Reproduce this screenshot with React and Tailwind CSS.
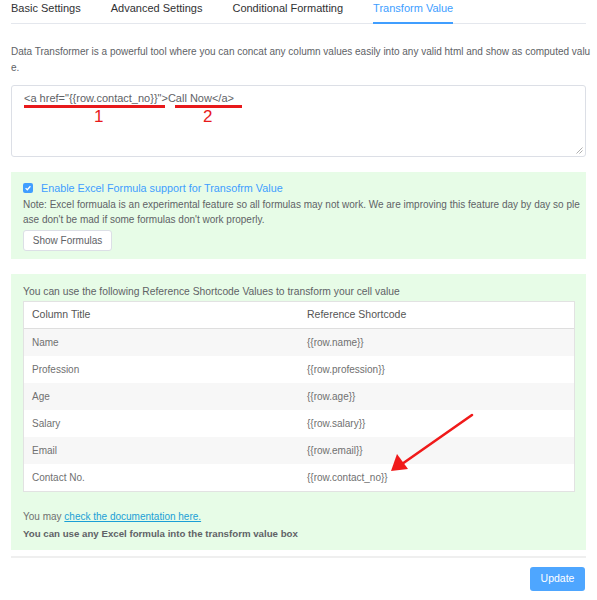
import React from "react";

const rows = [
  ["Name", "{{row.name}}"],
  ["Profession", "{{row.profession}}"],
  ["Age", "{{row.age}}"],
  ["Salary", "{{row.salary}}"],
  ["Email", "{{row.email}}"],
  ["Contact No.", "{{row.contact_no}}"],
];

export default function App() {
  return (
    <div
      className="relative w-[597px] h-[600px] bg-white px-[11px] text-[#606266] overflow-hidden"
      style={{ fontFamily: '"Liberation Sans", Arial, sans-serif' }}
    >
      {/* Tabs */}
      <div className="flex h-[24px] border-b border-[#e4e7ed] text-[11px] font-medium text-[#303133]">
        <div className="pr-[30px] pt-[1px] leading-[14px]">Basic Settings</div>
        <div className="pr-[30px] pt-[1px] leading-[14px]">Advanced Settings</div>
        <div className="pr-[30px] pt-[1px] leading-[14px]">Conditional Formatting</div>
        <div className="pt-[1px] leading-[14px] text-[#409eff] border-b-2 border-[#409eff] h-[24px] -mb-px">
          Transform Value
        </div>
      </div>

      {/* Description */}
      <div className="mt-[20px] text-[10px] leading-[16px] text-[#606266] whitespace-nowrap">
        <div>
          Data Transformer is a powerful tool where you can concat any column values easily into any valid html and show as computed valu
        </div>
        <div>e.</div>
      </div>

      {/* Textarea */}
      <div className="relative mt-[9px] h-[72px] border border-[#dcdfe6] rounded-[3px] pl-[12px] pt-[5px]">
        <div className="text-[11px] leading-[14px] text-[#606266] whitespace-nowrap">
          {'<a href="{{row.contact_no}}">Call Now</a>'}
        </div>
        <div className="absolute left-[12px] top-[19px] w-[141px] h-[2.5px] bg-[#e8191b]"></div>
        <div className="absolute left-[163px] top-[19px] w-[67px] h-[2.5px] bg-[#e8191b]"></div>
        <div className="absolute left-[82px] top-[22px] text-[17px] leading-[18px] text-[#e8191b]">1</div>
        <div className="absolute left-[191px] top-[22px] text-[17px] leading-[18px] text-[#e8191b]">2</div>
        <svg className="absolute right-[2px] bottom-[2px]" width="7" height="7" viewBox="0 0 7 7">
          <path d="M6.5 0.5 L0.5 6.5 M6.5 3.5 L3.5 6.5" stroke="#9a9a9a" strokeWidth="0.8" />
        </svg>
      </div>

      {/* Green box 1 */}
      <div className="mt-[15px] bg-[#e7fce7] pl-[12px] pr-[12px] pt-[11px] pb-[8px]">
        <div className="flex items-center gap-[8px] h-[10px]">
          <div className="w-[10px] h-[10px] rounded-[2px] bg-[#409eff] flex items-center justify-center">
            <svg width="8" height="8" viewBox="0 0 8 8">
              <path d="M1.6 4.1 L3.3 5.7 L6.4 2.3" stroke="white" strokeWidth="1.3" fill="none" />
            </svg>
          </div>
          <div className="text-[10.8px] leading-[14px] text-[#409eff] whitespace-nowrap">
            Enable Excel Formula support for Transofrm Value
          </div>
        </div>
        <div className="mt-[4px] text-[10px] leading-[15px] text-[#606266] whitespace-nowrap">
          <div>
            Note: Excel formuala is an experimental feature so all formulas may not work. We are improving this feature day by day so ple
          </div>
          <div>ase don't be mad if some formulas don't work properly.</div>
        </div>
        <div className="mt-[3px] w-[89px] h-[21px] bg-white border border-[#dcdfe6] rounded-[3px] flex items-center justify-center text-[10px] text-[#606266]">
          Show Formulas
        </div>
      </div>

      {/* Green box 2 */}
      <div className="mt-[15px] bg-[#e7fce7] pl-[12px] pr-[11px] pt-[10px] pb-[8px]">
        <div className="text-[10.3px] leading-[15px] text-[#606266] whitespace-nowrap">
          You can use the following Reference Shortcode Values to transform your cell value
        </div>
        <div className="mt-[2px] border border-[#e2e2e2] bg-white">
          <div className="grid grid-cols-2 h-[27px] items-center border-b border-[#dedede] text-[10.5px] text-[#555]">
            <div className="pl-[8px]">Column Title</div>
            <div className="pl-[8px]">Reference Shortcode</div>
          </div>
          {rows.map(([a, b], i) => (
            <div
              key={a}
              className={`grid grid-cols-2 h-[27px] items-center text-[10px] text-[#707070] ${i % 2 === 0 ? "bg-[#f7f7f7]" : "bg-white"}`}
            >
              <div className="pl-[8px]">{a}</div>
              <div className="pl-[8px]">{b}</div>
            </div>
          ))}
        </div>
        <div className="mt-[16px] text-[10px] leading-[17px] text-[#707070] whitespace-nowrap">
          You may <span className="text-[#1a9fd6] underline">check the documentation here.</span>
        </div>
        <div className="text-[9.7px] leading-[17px] font-bold text-[#606266] whitespace-nowrap">
          You can use any Excel formula into the transform value box
        </div>
      </div>

      {/* Separator */}
      <div className="mt-[6px] h-[2px] bg-[#efefef]"></div>

      {/* Footer */}
      <div className="flex justify-end mt-[9px] pr-[1px]">
        <div className="w-[55px] h-[24px] rounded-[3px] bg-[#4ea6ff] text-white text-[10.5px] flex items-center justify-center">
          Update
        </div>
      </div>

      {/* Red arrow annotation */}
      <svg className="absolute left-0 top-0 pointer-events-none" width="597" height="600">
        <line x1="472" y1="415" x2="402" y2="464" stroke="#f01a1a" strokeWidth="2.6" strokeLinecap="round" />
        <polygon points="391,471 397,454 408,469" fill="#f01a1a" />
      </svg>
    </div>
  );
}
